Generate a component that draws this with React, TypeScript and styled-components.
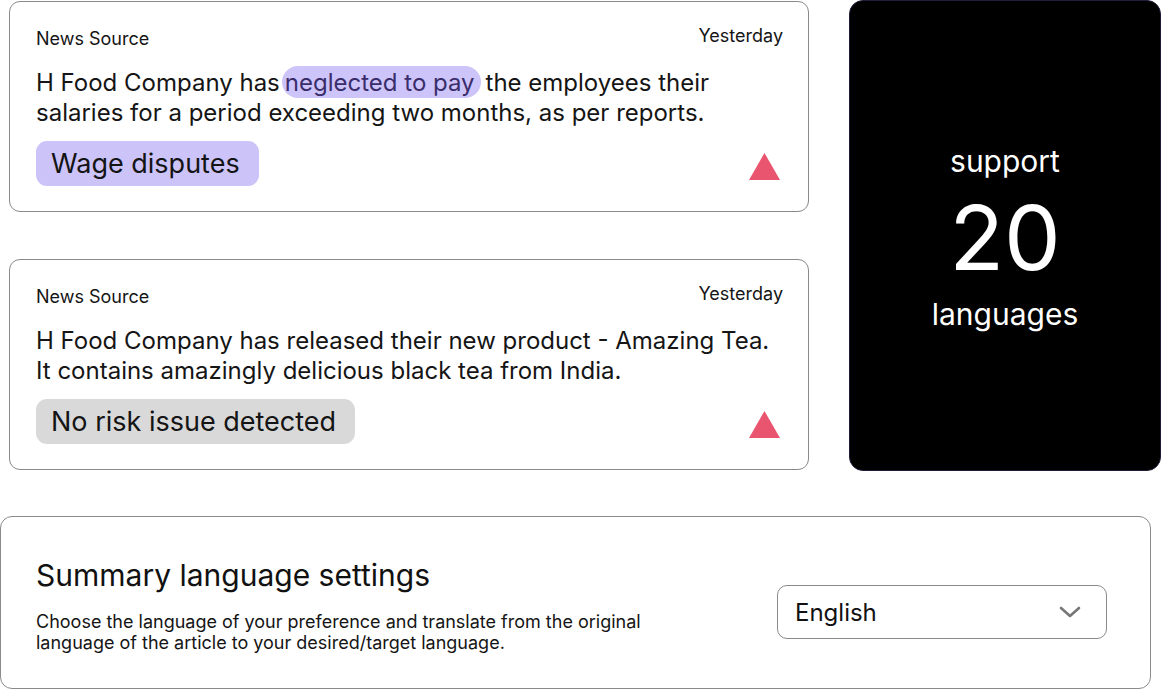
import React from "react";
import styled, { createGlobalStyle } from "styled-components";

const Global = createGlobalStyle`
  html, body { margin: 0; padding: 0; background: #ffffff; }
  body { font-family: Inter, "Noto Sans", "Liberation Sans", sans-serif; color: #111111; }
  * { box-sizing: border-box; }
`;

const Page = styled.div`
  width: 1161px;
  height: 690px;
  display: flex;
  flex-direction: column;
  overflow: hidden;
`;

const TopRow = styled.div`
  display: grid;
  grid-template-columns: 800px 312px;
  column-gap: 40px;
  padding-left: 9px;
`;

const CardColumn = styled.div`
  display: flex;
  flex-direction: column;
  gap: 47px;
  padding-top: 1px;
`;

const NewsCard = styled.article`
  height: 211px;
  border: 1px solid #8a8a8a;
  border-radius: 11px;
  background: #ffffff;
  padding: 23px 25px 0 26px;
  display: flex;
  flex-direction: column;
`;

const CardHeader = styled.div`
  display: flex;
  justify-content: space-between;
  align-items: flex-start;
  font-size: 18px;
  line-height: 22px;
  color: #151515;
`;

const Source = styled.span`
  margin-top: 3px;
`;

const Time = styled.span``;

const Body = styled.p`
  margin: 18px 0 0;
  font-size: 24px;
  line-height: 30px;
  color: #151515;
  white-space: nowrap;
`;

const Highlight = styled.span`
  background: #cdc4fa;
  color: #3a2d6b;
  border-radius: 16px;
  padding: 2px 6px 1px 3px;
  margin: 0 5px 0 2px;
`;

const CardFooter = styled.div`
  margin-top: 13px;
  display: flex;
  justify-content: space-between;
  align-items: center;
`;

const Tag = styled.span<{ $tone: "risk" | "none" }>`
  height: 45px;
  display: inline-flex;
  align-items: center;
  padding: 0 19px 0 15px;
  border-radius: 11px;
  font-size: 27px;
  color: #141414;
  background: ${(p) => (p.$tone === "risk" ? "#ccc3f9" : "#d9d9d9")};
`;

const Alert = styled.svg`
  width: 31px;
  height: 27px;
  margin: 6px 3px 0 0;
  display: block;
`;

const LangPanel = styled.aside`
  height: 471px;
  background: #000000;
  border: 1px solid #1e1e3a;
  border-radius: 14px;
  color: #ffffff;
  display: flex;
  flex-direction: column;
  align-items: center;
  justify-content: center;
  padding-top: 3px;
`;

const PanelLabel = styled.div`
  font-size: 30px;
  line-height: 36px;
`;

const PanelNumber = styled.div`
  font-size: 90px;
  line-height: 96px;
  margin: 11px 0 10px;
`;

const SettingsCard = styled.section`
  margin-top: 45px;
  width: 1151px;
  height: 173px;
  border: 1px solid #8a8a8a;
  border-radius: 12px;
  padding: 40px 43px 0 35px;
  display: flex;
  justify-content: space-between;
  align-items: flex-start;
`;

const SettingsText = styled.div`
  display: flex;
  flex-direction: column;
`;

const SettingsTitle = styled.h2`
  margin: 0;
  font-size: 30px;
  line-height: 36px;
  font-weight: 400;
  color: #111111;
`;

const SettingsDesc = styled.p`
  margin: 18px 0 0;
  font-size: 18px;
  line-height: 21px;
  color: #151515;
  white-space: nowrap;
`;

const Select = styled.div`
  margin-top: 28px;
  width: 330px;
  height: 54px;
  border: 1px solid #8a8a8a;
  border-radius: 10px;
  display: flex;
  align-items: center;
  justify-content: space-between;
  padding: 0 25px 0 17px;
  font-size: 24px;
  color: #111111;
`;

const Chevron = styled.svg`
  width: 22px;
  height: 12px;
  display: block;
`;

const Triangle = () => (
  <Alert viewBox="0 0 31 27">
    <polygon points="15.5,0 31,27 0,27" fill="#e9546f" />
  </Alert>
);

export default function App() {
  return (
    <Page>
      <Global />
      <TopRow>
        <CardColumn>
          <NewsCard>
            <CardHeader>
              <Source>News Source</Source>
              <Time>Yesterday</Time>
            </CardHeader>
            <Body>
              H Food Company has<Highlight>neglected to pay</Highlight>the employees their
              <br />
              salaries for a period exceeding two months, as per reports.
            </Body>
            <CardFooter>
              <Tag $tone="risk">Wage disputes</Tag>
              <Triangle />
            </CardFooter>
          </NewsCard>
          <NewsCard>
            <CardHeader>
              <Source>News Source</Source>
              <Time>Yesterday</Time>
            </CardHeader>
            <Body>
              H Food Company has released their new product - Amazing Tea.
              <br />
              It contains amazingly delicious black tea from India.
            </Body>
            <CardFooter>
              <Tag $tone="none">No risk issue detected</Tag>
              <Triangle />
            </CardFooter>
          </NewsCard>
        </CardColumn>
        <LangPanel>
          <PanelLabel>support</PanelLabel>
          <PanelNumber>20</PanelNumber>
          <PanelLabel>languages</PanelLabel>
        </LangPanel>
      </TopRow>
      <SettingsCard>
        <SettingsText>
          <SettingsTitle>Summary language settings</SettingsTitle>
          <SettingsDesc>
            Choose the language of your preference and translate from the original
            <br />
            language of the article to your desired/target language.
          </SettingsDesc>
        </SettingsText>
        <Select>
          <span>English</span>
          <Chevron viewBox="0 0 22 12">
            <polyline points="2,2 11,10 20,2" fill="none" stroke="#777777" strokeWidth="2.6" strokeLinecap="round" strokeLinejoin="round" />
          </Chevron>
        </Select>
      </SettingsCard>
    </Page>
  );
}
